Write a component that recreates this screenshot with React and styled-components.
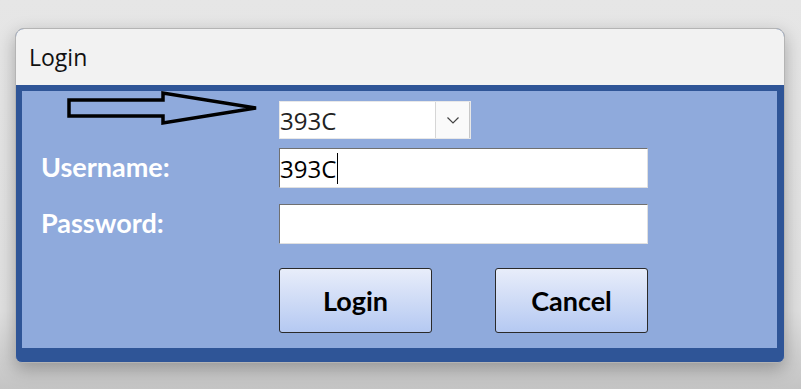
import React from "react";
import styled, { createGlobalStyle } from "styled-components";

const GlobalStyle = createGlobalStyle`
  html, body {
    margin: 0;
    padding: 0;
    height: 100%;
  }
  body {
    background: linear-gradient(#e6e6e6 0%, #e0e0e0 80%, #c4c4c4 100%);
    font-family: "Noto Sans", "Open Sans", sans-serif;
  }
`;

const Page = styled.div`
  padding: 28px 0 0 15px;
  height: 389px;
  box-sizing: border-box;
`;

const Window = styled.div`
  width: 770px;
  height: 335px;
  box-sizing: border-box;
  border: 1px solid #b4b4b4;
  border-radius: 9px 9px 7px 7px;
  overflow: hidden;
  display: flex;
  flex-direction: column;
  box-shadow: 0 6px 18px rgba(0, 0, 0, 0.28);
  background: #2f5597;
`;

const TitleBar = styled.div`
  height: 56px;
  background: #f2f2f2;
  display: flex;
  align-items: center;
  padding-left: 13px;
  font-family: "Open Sans", "Noto Sans", sans-serif;
  font-size: 23px;
  color: #111;
`;

const Body = styled.div`
  flex: 1;
  border-style: solid;
  border-color: #2f5597;
  border-width: 6px 7px 14px 6px;
  background: #8faadc;
  padding: 10px 0 0 19px;
  display: grid;
  grid-template-columns: 238px 369px;
  grid-template-rows: 38px 49px 56px 89px;
  align-items: end;
`;

const Label = styled.div`
  height: 40px;
  display: flex;
  align-items: center;
  padding-bottom: ${({ $lift }) => $lift || 0}px;
  box-sizing: border-box;
  font-family: "Lato", "Open Sans", sans-serif;
  font-weight: 700;
  font-size: 27px;
  color: #fff;
`;

const Arrow = styled.svg`
  margin: -11px 0 0 25px;
  align-self: start;
  display: block;
`;

const Combo = styled.div`
  width: 192px;
  height: 38px;
  box-sizing: border-box;
  display: flex;
  background: #fff;
  border: 1px solid #e8e8e8;
`;

const ComboText = styled.div`
  flex: 1;
  display: flex;
  align-items: center;
  font-family: "Open Sans", "Noto Sans", sans-serif;
  font-size: 24px;
  color: #222;
`;

const ComboButton = styled.div`
  width: 33px;
  background: #fafafa;
  border-left: 1px solid #d6d6d6;
  border-right: 1px solid #c8c8c8;
  display: flex;
  align-items: center;
  justify-content: center;
`;

const TextBox = styled.div`
  width: 369px;
  height: 40px;
  box-sizing: border-box;
  background: #fff;
  border-top: 1px solid #707070;
  border-left: 1px solid #707070;
  border-right: 1px solid #e0e0e0;
  border-bottom: 1px solid #e0e0e0;
  display: flex;
  align-items: center;
  font-family: "Open Sans", "Noto Sans", sans-serif;
  font-size: 24px;
  color: #000;
`;

const Caret = styled.span`
  display: inline-block;
  width: 1px;
  height: 31px;
  background: #000;
  margin-left: 1px;
`;

const Buttons = styled.div`
  display: flex;
  gap: 63px;
`;

const Button = styled.button`
  width: ${({ $w }) => $w}px;
  height: 65px;
  border: 1px solid #2a2a2a;
  border-radius: 3px;
  background: linear-gradient(#e8edfa, #b5c9f2);
  font-family: "Lato", "Open Sans", sans-serif;
  font-weight: 700;
  font-size: 27px;
  color: #000;
  padding: 0;
`;

export default function App() {
  return (
    <Page>
      <GlobalStyle />
      <Window>
        <TitleBar>Login</TitleBar>
        <Body>
          <Arrow width="196" height="36" viewBox="0 0 196 36">
            <polygon
              points="3,10 97,10 97,3 190,18 97,33 97,26 3,26"
              fill="none"
              stroke="#000"
              strokeWidth="3.5"
              strokeLinejoin="miter"
            />
          </Arrow>
          <Combo>
            <ComboText>393C</ComboText>
            <ComboButton>
              <svg width="14" height="9" viewBox="0 0 14 9">
                <path d="M1.5 1.5 L7 7 L12.5 1.5" fill="none" stroke="#444" strokeWidth="1.2" />
              </svg>
            </ComboButton>
          </Combo>
          <Label $lift={3}>Username:</Label>
          <TextBox>
            393C
            <Caret />
          </TextBox>
          <Label $lift={4}>Password:</Label>
          <TextBox />
          <div />
          <Buttons>
            <Button $w={155}>Login</Button>
            <Button $w={155}>Cancel</Button>
          </Buttons>
        </Body>
      </Window>
    </Page>
  );
}
